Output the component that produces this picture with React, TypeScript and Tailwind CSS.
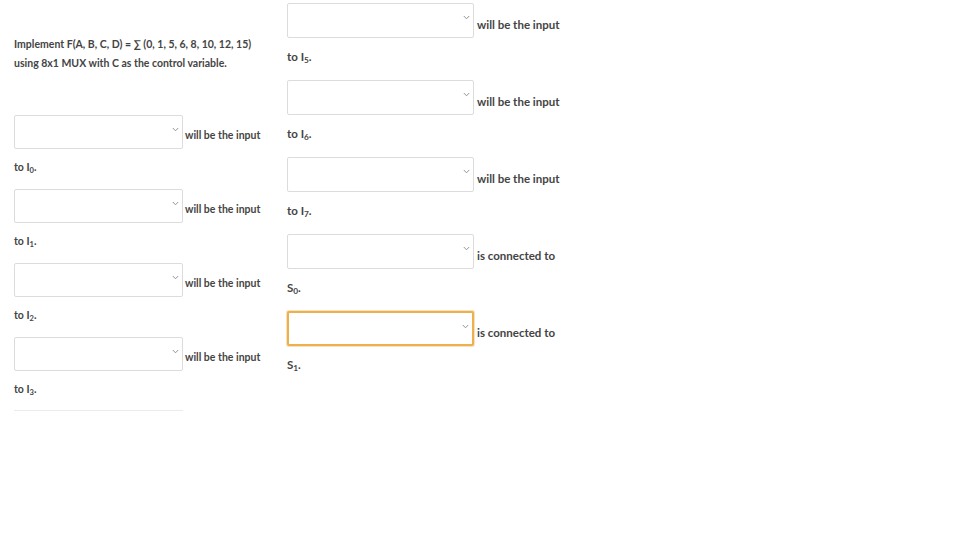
import { ReactNode } from "react";

const leftRows = [
  { text: "will be the input", tail: "to I", sub: "0" },
  { text: "will be the input", tail: "to I", sub: "1" },
  { text: "will be the input", tail: "to I", sub: "2" },
  { text: "will be the input", tail: "to I", sub: "3" },
];

const rightRows = [
  { text: "will be the input", tail: "to I", sub: "5" },
  { text: "will be the input", tail: "to I", sub: "6" },
  { text: "will be the input", tail: "to I", sub: "7" },
  { text: "is connected to", tail: "S", sub: "0" },
  { text: "is connected to", tail: "S", sub: "1", focused: true },
];

function Chevron() {
  return (
    <svg width="7" height="5" viewBox="0 0 7 5" className="shrink-0">
      <path d="M0.8 1 L3.5 3.8 L6.2 1" fill="none" stroke="#8a8a8a" strokeWidth="0.9" />
    </svg>
  );
}

function Select({ width, focused }: { width: string; focused?: boolean }) {
  return (
    <div
      className={`${width} flex items-start justify-end pt-[11px] pr-[3px] bg-white rounded-[2px] ${
        focused
          ? "border-2 border-[#eeb04e] shadow-[0_0_0_1px_#f6e2bf]"
          : "border border-[#dcdcdc]"
      }`}
    >
      <Chevron />
    </div>
  );
}

function Tail({ tail, sub }: { tail: string; sub: string }): ReactNode {
  return (
    <>
      {tail}
      <sub className="text-[0.72em] relative top-[2px]">{sub}</sub>.
    </>
  );
}

export default function App() {
  return (
    <div
      className="w-[960px] h-[540px] bg-white flex text-[#444] font-bold"
      style={{ fontFamily: "Lato, 'Open Sans', sans-serif" }}
    >
      <div className="w-[287px] pl-[14px] pt-[35px] flex flex-col text-[10.5px]">
        <div className="leading-[19px]">
          <div>Implement F(A, B, C, D) = ∑ (0, 1, 5, 6, 8, 10, 12, 15)</div>
          <div>using 8x1 MUX with C as the control variable.</div>
        </div>
        <div className="mt-[42px] flex flex-col">
          {leftRows.map((r) => (
            <div key={r.sub} className="flex flex-col">
              <div className="flex items-stretch h-[34px]">
                <Select width="w-[169px]" />
                <span className="ml-[2px] self-center mt-[8px]">{r.text}</span>
              </div>
              <div className="mt-[10px] mb-[14px] leading-[16px]">
                <Tail tail={r.tail} sub={r.sub} />
              </div>
            </div>
          ))}
          <div className="w-[169px] border-t border-[#ececec] -mt-[1px]" />
        </div>
      </div>
      <div className="pt-[3px] flex flex-col text-[11.5px]">
        {rightRows.map((r) => (
          <div key={r.tail + r.sub} className="flex flex-col">
            <div className="flex items-stretch h-[35px]">
              <Select width="w-[187px]" focused={r.focused} />
              <span className="ml-[3px] self-center mt-[8px]">{r.text}</span>
            </div>
            <div className="mt-[11px] mb-[15px] leading-[16px]">
              <Tail tail={r.tail} sub={r.sub} />
            </div>
          </div>
        ))}
      </div>
    </div>
  );
}
